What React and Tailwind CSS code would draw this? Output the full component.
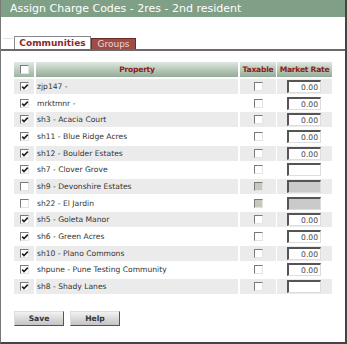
import React from "react";

const rows = [
    { name: "zjp147 -", on: true, rate: "0.00" },
    { name: "mrktmnr -", on: true, rate: "0.00" },
    { name: "sh3 - Acacia Court", on: true, rate: "0.00" },
    { name: "sh11 - Blue Ridge Acres", on: true, rate: "0.00" },
    { name: "sh12 - Boulder Estates", on: true, rate: "0.00" },
    { name: "sh7 - Clover Grove", on: true, rate: "" },
    { name: "sh9 - Devonshire Estates", on: false, rate: "", disabled: true },
    { name: "sh22 - El Jardin", on: false, rate: "", disabled: true },
    { name: "sh5 - Goleta Manor", on: true, rate: "0.00" },
    { name: "sh6 - Green Acres", on: true, rate: "0.00" },
    { name: "sh10 - Plano Commons", on: true, rate: "0.00" },
    { name: "shpune - Pune Testing Community", on: true, rate: "0.00" },
    { name: "sh8 - Shady Lanes", on: true, rate: "" },
];

function Box({ checked, disabled }) {
    return (
        <span
            className={
                "relative inline-block w-[9px] h-[9px] border-t border-l border-t-[#7a7a7a] border-l-[#7a7a7a] border-b border-r border-b-[#e4e4e4] border-r-[#e4e4e4] " +
                (disabled ? "bg-[#c8c8c0]" : "bg-white")
            }
        >
            {checked && (
                <svg viewBox="0 0 8 8" className="absolute inset-0 w-[8px] h-[8px]">
                    <path d="M1.2 3.6 L3 5.6 L6.8 1.6" fill="none" stroke="#222" strokeWidth="1.6" />
                </svg>
            )}
        </span>
    );
}

export default function App() {
    return (
        <div className="w-[347px] h-[344px] bg-white font-['DejaVu_Sans',sans-serif] flex flex-col border-l border-r-2 border-b-2 border-l-[#777] border-r-[#444] border-b-[#444] overflow-hidden">

            {/* Title bar */}
            <div className="h-[17px] bg-[#7f9f87] text-white text-[11px] leading-[17px] pl-[9px] whitespace-nowrap">
                Assign Charge Codes - 2res - 2nd resident
            </div>

            {/* Tabs */}
            <div className="mt-[21px] flex items-end h-[13px] border-b-2 border-[#6a6a6a] pl-[13px] relative">
                <div className="absolute left-[2px] top-0 w-[10px] h-px bg-[#e2e2e2]" />
                <div className="h-[13px] w-[77px] bg-white border border-b-0 border-[#888] text-[#8b2b2b] font-bold text-[9px] leading-[12px] text-center">
                    Communities
                </div>
                <div className="h-[11px] w-[45px] bg-[#9c4d48] border border-b-0 border-[#6d2a26] text-[#f1d6d2] text-[9px] leading-[10px] text-center">
                    Groups
                </div>
            </div>

            {/* Table */}
            <div className="mt-[11px] ml-[13px] w-[320px] flex flex-col">
                <div className="flex h-[15px] text-[7.6px] tracking-[-0.25px] font-bold text-[#8b1c1c] leading-[15px] whitespace-nowrap">
                    <div className="w-[20px] bg-gradient-to-b from-[#e3ebe3] to-[#9db39f] flex items-center justify-center">
                        <Box />
                    </div>
                    <div className="w-[202px] ml-[2px] bg-gradient-to-b from-[#dfe8df] to-[#93ab97] text-center">
                        Property
                    </div>
                    <div className="w-[36px] ml-[2px] bg-gradient-to-b from-[#dfe8df] to-[#93ab97] text-center">
                        Taxable
                    </div>
                    <div className="w-[55px] ml-[1px] bg-gradient-to-b from-[#dfe8df] to-[#93ab97] text-center">
                        Market Rate
                    </div>
                </div>

                <div className="mt-[2px] grid auto-rows-[15px] gap-y-[1.67px]">
                    {rows.map((r, i) => {
                        const bg = i % 2 === 0 ? "bg-[#ebebeb]" : "bg-white";
                        return (
                            <div key={i} className="flex text-[7.6px] text-[#333] leading-[15px]">
                                <div className={"w-[20px] flex items-center justify-center " + bg}>
                                    <Box checked={r.on} />
                                </div>
                                <div className={"w-[202px] ml-[2px] pl-[1px] whitespace-nowrap " + bg}>
                                    {r.name}
                                </div>
                                <div className={"w-[36px] ml-[2px] flex items-center justify-center " + bg}>
                                    <Box disabled={r.disabled} />
                                </div>
                                <div className={"w-[55px] ml-[1px] flex items-center pl-[10px] " + bg}>
                                    <div
                                        className={
                                            "w-[34px] h-[13px] border-t-2 border-l-2 border-t-[#555] border-l-[#555] border-b border-r border-b-[#ddd] border-r-[#ddd] text-right pr-[2px] text-[7.6px] leading-[11px] text-[#444] " +
                                            (r.disabled ? "bg-[#cacaca]" : "bg-white")
                                        }
                                    >
                                        {r.rate}
                                    </div>
                                </div>
                            </div>
                        );
                    })}
                </div>
            </div>

            {/* Buttons */}
            <div className="mt-[17px] ml-[13px] flex gap-[6px]">
                <button className="w-[50px] h-[15px] border border-t-[#ddd] border-l-[#ddd] border-b-[#555] border-r-[#555] bg-gradient-to-b from-[#f2f2f2] to-[#c4c4c4] text-[7.6px] font-bold text-[#333] leading-[13px]">
                    Save
                </button>
                <button className="w-[50px] h-[15px] border border-t-[#ddd] border-l-[#ddd] border-b-[#555] border-r-[#555] bg-gradient-to-b from-[#f2f2f2] to-[#c4c4c4] text-[7.6px] font-bold text-[#333] leading-[13px]">
                    Help
                </button>
            </div>
        </div>
    );
}
